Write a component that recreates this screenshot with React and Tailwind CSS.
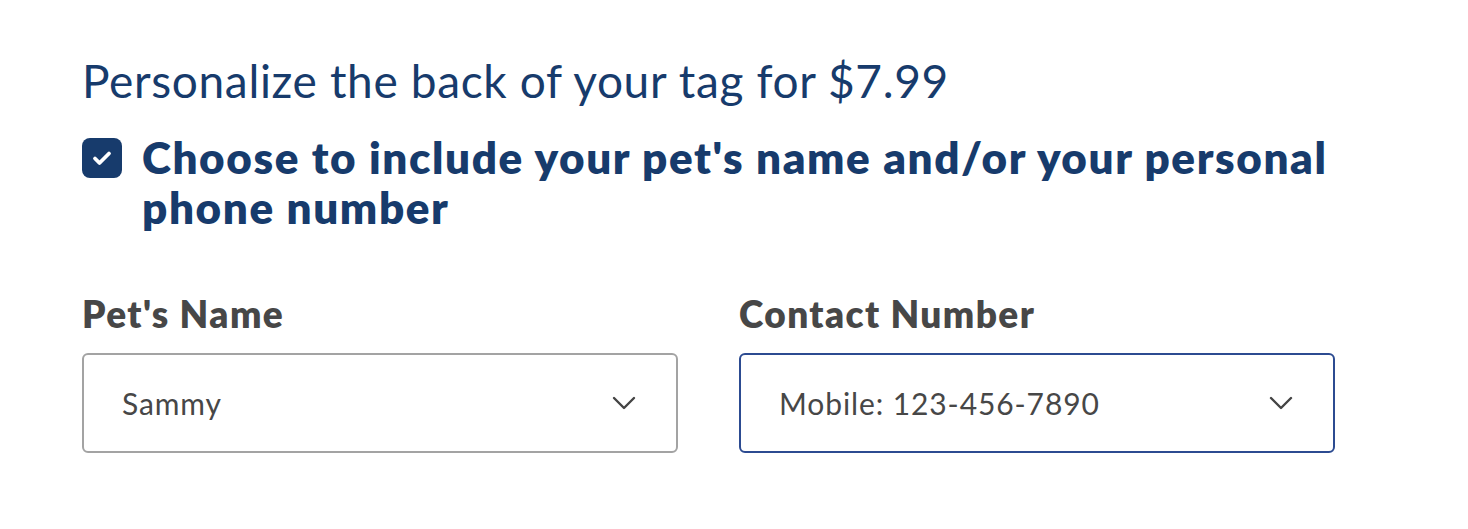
import React from 'react';

function ChevronDown() {
  return (
    <svg width="24" height="14" viewBox="0 0 24 14" fill="none">
      <path d="M2 2l10 10L22 2" stroke="#444" strokeWidth="2.4" strokeLinecap="round" strokeLinejoin="round" />
    </svg>
  );
}

function SelectBox({ value, active }) {
  return (
    <div
      className={`flex h-[100px] w-[596px] items-center justify-between rounded-[6px] border-2 bg-white pl-[38px] pr-[40px] ${
        active ? 'border-[#2c4b91]' : 'border-[#a3a3a3]'
      }`}
    >
      <span className="text-[30px] tracking-[0.9px] text-[#474747]">{value}</span>
      <ChevronDown />
    </div>
  );
}

export default function App() {
  return (
    <div className="min-h-[529px] bg-white pl-[82px] pt-[51px]" style={{ fontFamily: 'Lato, "Liberation Sans", sans-serif' }}>
      <h2 className="text-[46px] leading-[60px] tracking-[0.65px] text-[#173b6c]">Personalize the back of your tag for $7.99</h2>

      <div className="mt-[21px] flex items-start gap-[20px]">
        <div className="mt-[6px] flex h-[40px] w-[40px] shrink-0 items-center justify-center rounded-[8px] bg-[#173b6c]">
          <svg width="22" height="18" viewBox="0 0 22 18" fill="none">
            <path d="M4 9.5l4.5 4.5L18 4.5" stroke="white" strokeWidth="3.8" strokeLinecap="round" strokeLinejoin="round" />
          </svg>
        </div>
        <p className="w-[1220px] text-[44px] font-extrabold leading-[50px] tracking-[1.6px] text-[#173b6c]">
          Choose to include your pet's name and/or your personal phone number
        </p>
      </div>

      <div className="mt-[62px] flex gap-[61px]">
        <div>
          <label className="block text-[37px] font-extrabold leading-[40px] tracking-[1.4px] text-[#474747]">Pet's Name</label>
          <div className="mt-[19px]">
            <SelectBox value="Sammy" />
          </div>
        </div>
        <div>
          <label className="block text-[37px] font-extrabold leading-[40px] tracking-[1.4px] text-[#474747]">Contact Number</label>
          <div className="mt-[19px]">
            <SelectBox value="Mobile: 123-456-7890" active />
          </div>
        </div>
      </div>
    </div>
  );
}
